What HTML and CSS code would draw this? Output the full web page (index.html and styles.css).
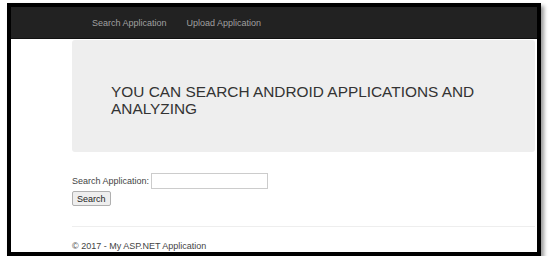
FILE: index.html
```html
<!DOCTYPE html>
<html lang="en">

<head>
    <meta charset="UTF-8">
    <meta name="viewport" content="width=device-width, initial-scale=1.0">
    <title>Search Application - My ASP.NET Application</title>
    <link rel="stylesheet" href="styles.css">
</head>

<body>
    <div class="frame">
        <nav class="navbar">
            <ul class="nav-links">
                <li><a href="#">Search Application</a></li>
                <li><a href="#">Upload Application</a></li>
            </ul>
        </nav>

        <div class="body-content">
            <div class="jumbotron">
                <h2>YOU CAN SEARCH ANDROID APPLICATIONS AND ANALYZING</h2>
            </div>

            <form class="search-form">
                <div class="search-row">
                    <label for="appName">Search Application:</label>
                    <input type="text" id="appName" name="appName">
                </div>
                <button type="submit">Search</button>
            </form>

            <hr>
            <footer>
                <p>&copy; 2017 - My ASP.NET Application</p>
            </footer>
        </div>
    </div>
</body>

</html>
```

FILE: styles.css
```css
/* Basic Reset */
html,
body {
    margin: 0;
    padding: 0;
    background: #ffffff;
    font-family: 'Liberation Sans', Arial, sans-serif;
    color: #333333;
}

/* Screenshot frame */
.frame {
    width: 526px;
    height: 245px;
    margin: 3px 0 0 7px;
    border: 4px solid #000000;
    box-shadow: 3px 3px 4px rgba(0, 0, 0, 0.4);
    overflow: hidden;
    background: #ffffff;
}

/* Navbar */
.navbar {
    height: 31px;
    background-color: #222222;
    border-bottom: 1px solid #111111;
}

.nav-links {
    display: flex;
    margin: 0;
    padding: 0 0 0 71px;
    list-style: none;
}

.nav-links a {
    display: block;
    padding: 2px 10px 0;
    line-height: 29px;
    font-size: 9px;
    color: #a0a0a0;
    text-decoration: none;
}

/* Page content */
.body-content {
    padding: 0 2px 0 61px;
}

.jumbotron {
    margin-top: 1px;
    padding: 43px 39px 35px;
    background-color: #eeeeee;
    border-radius: 3px;
}

.jumbotron h2 {
    margin: 0;
    font-size: 15.4px;
    font-weight: normal;
    line-height: 17px;
    color: #333333;
}

/* Search form */
.search-form {
    margin-top: 21px;
}

.search-row {
    display: flex;
    align-items: center;
    gap: 2px;
}

.search-row label {
    font-size: 9px;
    color: #444444;
}

.search-row input {
    width: 117px;
    height: 16px;
    box-sizing: border-box;
    margin: 0;
    padding: 0 3px;
    border: 1px solid #cccccc;
    font-size: 9px;
    outline: none;
}

.search-form button {
    display: block;
    margin-top: 2px;
    height: 15px;
    padding: 0 4px;
    box-sizing: border-box;
    border: 1px solid #b0b0b0;
    border-radius: 2px;
    background-color: #eeeeee;
    font-family: inherit;
    font-size: 9px;
    color: #222222;
}

/* Footer */
hr {
    margin: 20px 0 0;
    border: 0;
    border-top: 1px solid #eeeeee;
}

footer p {
    margin: 13px 0 0;
    font-size: 9px;
    line-height: 13px;
    color: #444444;
}
```
